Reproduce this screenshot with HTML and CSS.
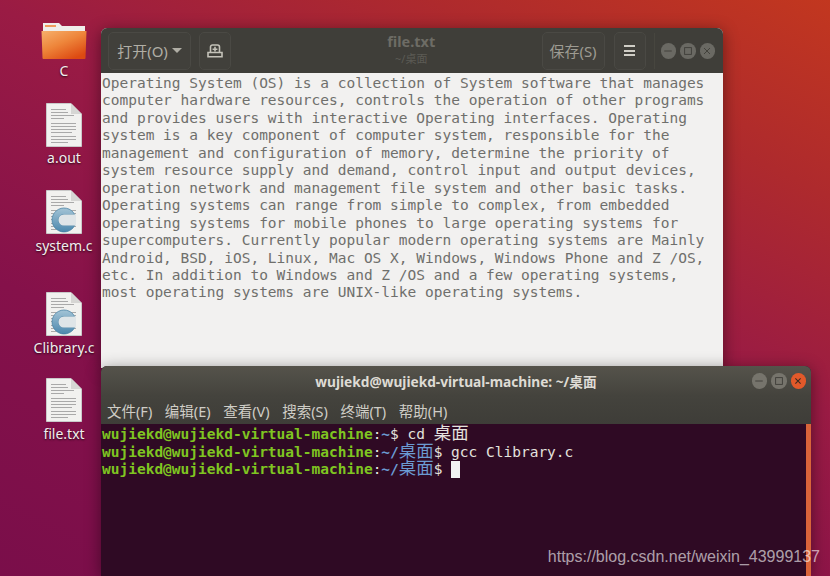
FILE: index.html
```html
<!DOCTYPE html>
<html lang="zh">
<head>
<meta charset="utf-8">
<title>Desktop</title>
<link rel="stylesheet" href="styles.css">
</head>
<body>
<svg width="0" height="0" class="defs">
  <defs>
    <linearGradient id="fold" x1="0" y1="0" x2="0.7" y2="1"><stop offset="0" stop-color="#f6b06c"/><stop offset="0.5" stop-color="#ee853a"/><stop offset="1" stop-color="#dd4a12"/></linearGradient>
    <linearGradient id="cg" x1="0" y1="0" x2="0" y2="1"><stop offset="0" stop-color="#a3c4d6"/><stop offset="1" stop-color="#4c88ad"/></linearGradient>
    <symbol id="paper" viewBox="0 0 36 44">
      <path d="M0.5 0.5H25L35.5 11V43.5H0.5Z" fill="#f1f1ef" stroke="#c9c9c9"/>
      <path d="M25 0.5V11H35.5Z" fill="#d6d6d4"/>
    </symbol>
    <symbol id="lines" viewBox="0 0 36 44">
      <path d="M5 6.5H20M5 9.5H22M5 12.5H28M5 15.5H18M5 20.5H30M5 23.5H30M5 26.5H30M5 29.5H26M5 33.5H30M5 36.5H30M5 39.5H22" stroke="#a9a9a9" stroke-width="1"/>
    </symbol>
    <symbol id="cee" viewBox="0 0 36 44">
      <circle cx="18" cy="30" r="12" fill="#dfe5e8"/>
      <path d="M28.7 24.5A12 12 0 1 0 28.7 35.5L18 35.5A5.5 5.5 0 0 1 18 24.5Z" fill="url(#cg)" stroke="#3f7b9f" stroke-width="0.7"/>
      <path d="M18 24.5H30V35.5H18A5.5 5.5 0 0 1 18 24.5Z" fill="#dfe5e8"/>
    </symbol>
  </defs>
</svg>

<section class="icons">
  <figure class="item i1">
    <svg class="ico" viewBox="0 0 46 38" width="46" height="38">
      <path d="M2 1H18L21 4H44V12H2Z" fill="#efeeea"/>
      <rect x="4" y="3" width="11" height="2" fill="#ef9b5e"/>
      <path d="M0.5 9H45.5L44.5 36A1 1 0 0 1 43.5 37H2.500A1 1 0 0 1 1.500 36Z" fill="url(#fold)"/>
    </svg>
    <figcaption>C</figcaption>
  </figure>
  <figure class="item i2">
    <svg class="ico" width="36" height="44"><use href="#paper"/><use href="#lines"/></svg>
    <figcaption>a.out</figcaption>
  </figure>
  <figure class="item i3">
    <svg class="ico" width="36" height="44"><use href="#paper"/><use href="#lines"/><use href="#cee"/></svg>
    <figcaption>system.c</figcaption>
  </figure>
  <figure class="item i4">
    <svg class="ico" width="36" height="44"><use href="#paper"/><use href="#lines"/><use href="#cee"/></svg>
    <figcaption>Clibrary.c</figcaption>
  </figure>
  <figure class="item i5">
    <svg class="ico" width="36" height="44"><use href="#paper"/><use href="#lines"/></svg>
    <figcaption>file.txt</figcaption>
  </figure>
</section>

<main class="window editor">
  <header class="ed-bar">
    <div class="btn open">打开(O)<span class="caret"></span></div>
    <div class="btn newdoc">
      <svg width="16" height="14" viewBox="0 0 16 14"><path d="M3.500 8.500V3A2 2 0 0 1 5.500 1H10.500A2 2 0 0 1 12.500 3V8.500M1 8.500H15V12.800H1Z" fill="none" stroke="#c4c2b9" stroke-width="1.6"/><path d="M8 2.800V7.500M5.600 5.200H10.400" stroke="#c4c2b9" stroke-width="1.6"/></svg>
    </div>
    <div class="ed-title"><strong>file.txt</strong><span>~/桌面</span></div>
    <div class="btn save">保存(S)</div>
    <div class="btn menu"><i></i><i></i><i></i></div>
    <div class="sep"></div>
    <div class="controls dim">
      <span class="ctl"><svg viewBox="0 0 16 16"><path d="M3 8H13" stroke="#3e3d38" stroke-width="1.2"/></svg></span>
      <span class="ctl"><svg viewBox="0 0 16 16"><rect x="3.5" y="3.5" width="9" height="9" fill="none" stroke="#3e3d38" stroke-width="1.2"/></svg></span>
      <span class="ctl"><svg viewBox="0 0 16 16"><path d="M4 4L12 12M12 4L4 12" stroke="#3e3d38" stroke-width="1.2"/></svg></span>
    </div>
  </header>
  <pre class="ed-text">Operating System (OS) is a collection of System software that manages
computer hardware resources, controls the operation of other programs
and provides users with interactive Operating interfaces. Operating
system is a key component of computer system, responsible for the
management and configuration of memory, determine the priority of
system resource supply and demand, control input and output devices,
operation network and management file system and other basic tasks.
Operating systems can range from simple to complex, from embedded
operating systems for mobile phones to large operating systems for
supercomputers. Currently popular modern operating systems are Mainly
Android, BSD, iOS, Linux, Mac OS X, Windows, Windows Phone and Z /OS,
etc. In addition to Windows and Z /OS and a few operating systems,
most operating systems are UNIX-like operating systems.</pre>
</main>

<main class="window terminal">
  <header class="t-title">
    <span class="t-name">wujiekd@wujiekd-virtual-machine: ~/桌面</span>
    <div class="controls">
      <span class="ctl lit"><svg viewBox="0 0 16 16"><path d="M3 8H13" stroke="#3e3d38" stroke-width="1.2"/></svg></span>
      <span class="ctl lit"><svg viewBox="0 0 16 16"><rect x="3.5" y="3.5" width="9" height="9" fill="none" stroke="#3e3d38" stroke-width="1.2"/></svg></span>
      <span class="ctl close"><svg viewBox="0 0 16 16"><path d="M4.5 4.5L11.5 11.5M11.5 4.5L4.5 11.5" stroke="#3a2a20" stroke-width="1.4"/></svg></span>
    </div>
  </header>
  <nav class="t-menu"><span>文件(F)</span><span>编辑(E)</span><span>查看(V)</span><span>搜索(S)</span><span>终端(T)</span><span>帮助(H)</span></nav>
  <div class="t-body">
    <pre class="t-text"><b>wujiekd@wujiekd-virtual-machine</b>:<em>~</em>$ cd <span class="cjk">桌面</span>
<b>wujiekd@wujiekd-virtual-machine</b>:<em>~/<span class="cjk">桌面</span></em>$ gcc Clibrary.c
<b>wujiekd@wujiekd-virtual-machine</b>:<em>~/<span class="cjk">桌面</span></em>$ <span class="cursor"></span></pre>
    <div class="scroll"></div>
  </div>
</main>

<div class="mark">https://blog.csdn.net/weixin_43999137</div>
</body>
</html>
```

FILE: styles.css
```css
html, body {
  margin: 0;
  padding: 0;
  width: 830px;
  height: 576px;
  overflow: hidden;
}
body {
  position: relative;
  background: linear-gradient(26deg, #7a0e4a 0%, #85114a 30%, #9a1b44 58%, #ae2a2d 80%, #c2371f 100%);
  font-family: "Noto Sans", "Noto Sans CJK SC", sans-serif;
}
.defs { position: absolute; }
.icons { position: absolute; left: 0; top: 0; width: 100px; height: 460px; }
.item {
  position: absolute;
  left: 14px;
  width: 100px;
  margin: 0;
  display: flex;
  flex-direction: column;
  align-items: center;
}
.ico { display: block; }
.item figcaption {
  color: #f2eeee;
  font-size: 14px;
  line-height: 18px;
  margin-top: 3px;
  text-shadow: 0 1px 2px rgba(0,0,0,.7);
  white-space: nowrap;
}
.i1 { top: 22px; }
.i2 { top: 103px; }
.i3 { top: 190px; }
.i4 { top: 292px; }
.i5 { top: 378px; }
.i1 figcaption { margin-top: 2px; }
.i2 figcaption { margin-top: 2px; }

.window { position: absolute; display: flex; flex-direction: column; box-shadow: 0 3px 16px rgba(0,0,0,.45); }
.editor { left: 101px; top: 28px; width: 622px; height: 340px; border-radius: 6px 6px 0 0; overflow: hidden; background: #f2f1f0; }
.ed-bar {
  height: 45px;
  flex: none;
  display: flex;
  align-items: center;
  box-sizing: border-box;
  padding: 0 8px 0 7px;
  background: #3f3e39;
  color: #a8a69d;
}
.btn {
  height: 38px;
  box-sizing: border-box;
  border: 1px solid #4a4944;
  border-radius: 5px;
  display: flex;
  align-items: center;
  justify-content: center;
  font-size: 15px;
  color: #b0aea5;
  background: #41403b;
}
.open { width: 83px; }
.caret { width: 0; height: 0; margin-left: 4px; border: 5px solid transparent; border-top-color: #b0aea5; border-bottom: 0; }
.newdoc { width: 32px; margin-left: 8px; }
.ed-title { flex: 1; display: flex; flex-direction: column; align-items: center; line-height: 17px; padding-left: 50px; margin-top: -2px; }
.ed-title strong { font-size: 14.5px; color: #6d6c65; }
.ed-title span { font-size: 11px; color: #5c5b55; }
.save { width: 63px; color: #9d9b92; }
.menu { width: 32px; margin-left: 9px; flex-direction: column; gap: 2.5px; }
.menu i { display: block; width: 11px; height: 2px; background: #d0cec6; }
.sep { width: 1px; height: 36px; background: #47463f; margin: 0 6px 0 8px; }
.controls { display: flex; gap: 4px; }
.dim { margin-top: 1px; }
.ctl { width: 15.5px; height: 15.5px; border-radius: 50%; background: #6a6963; display: flex; align-items: center; justify-content: center; }
.ctl svg { width: 12px; height: 12px; }
.ed-text {
  margin: 0;
  padding: 2px 0 0 1px;
  font-family: "DejaVu Sans Mono", monospace;
  font-size: 14.5px;
  line-height: 17.45px;
  color: #6f6f6c;
}

.terminal { left: 101px; top: 366px; width: 710px; height: 210px; border-radius: 6px 6px 0 0; overflow: hidden; background: #300a24; }
.t-title {
  height: 30px;
  flex: none;
  display: flex;
  align-items: center;
  justify-content: center;
  position: relative;
  background: linear-gradient(#55534b, #44433d);
}
.t-name { font-size: 13.7px; font-weight: 700; color: #dedbd4; }
.t-title .controls { position: absolute; right: 5px; top: 7px; }
.lit { background: #76746c; }
.close { background: #e2592a; }
.t-menu {
  height: 28px;
  flex: none;
  display: flex;
  align-items: center;
  gap: 12.6px;
  padding-left: 6px;
  background: linear-gradient(#44433d, #3e3d38);
  color: #cfcdc6;
  font-size: 14.5px;
}
.t-body { flex: 1; display: flex; background: #2f0a24; }
.t-text {
  flex: 1;
  margin: 0;
  padding: 2px 0 0 1px;
  font-family: "DejaVu Sans Mono", "Noto Sans CJK SC", monospace;
  font-size: 14.5px;
  line-height: 17.5px;
  color: #e4e2de;
}
.t-text b { color: #7fc521; font-weight: 700; }
.t-text em { font-style: normal; color: #6b9bd2; font-weight: 700; }
.t-text .cjk { font-size: 17.4px; line-height: 0; font-weight: 400; }
.cursor { display: inline-block; width: 9px; height: 17px; background: #f2f2f2; vertical-align: -4px; }
.scroll { width: 5px; background: #d9643a; }

.mark {
  position: absolute;
  right: 10px;
  top: 547px;
  font-family: "Liberation Sans", sans-serif;
  font-size: 16px;
  line-height: 20px;
  color: rgba(255,255,255,.62);
}
```
